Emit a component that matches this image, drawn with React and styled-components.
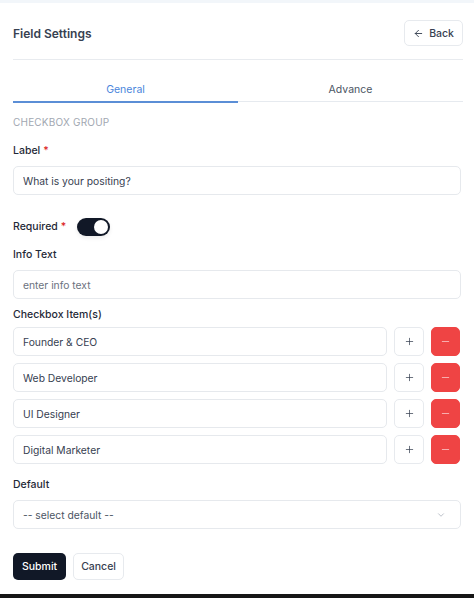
import React, { useState } from "react";
import styled, { createGlobalStyle } from "styled-components";
import { ArrowLeft, Plus, Minus, ChevronDown } from "lucide-react";

const GlobalStyle = createGlobalStyle`
  * { box-sizing: border-box; }
  body {
    margin: 0;
    background: #f2f6fa;
    font-family: Inter, "Noto Sans", "Liberation Sans", sans-serif;
    color: #374151;
  }
`;

const Page = styled.div`
  height: 598px;
  display: flex;
  flex-direction: column;
  padding-top: 3px;
`;

const Card = styled.div`
  flex: 1;
  background: #ffffff;
  padding: 0 11px 0 13px;
  display: flex;
  flex-direction: column;
`;

const BottomEdge = styled.div`
  height: 4px;
  background: #161616;
`;

const Header = styled.div`
  display: flex;
  align-items: center;
  justify-content: space-between;
  padding: 17px 0 13px;
  border-bottom: 1px solid #e8ebef;
`;

const Title = styled.h2`
  margin: 0;
  font-size: 12px;
  font-weight: 600;
  color: #374151;
`;

const OutlineButton = styled.button`
  height: ${(p) => p.$h || 27}px;
  padding: 0 ${(p) => p.$px || 7}px;
  display: inline-flex;
  align-items: center;
  gap: 5px;
  border: 1px solid #e7eaee;
  border-radius: 5px;
  background: #fff;
  font-family: inherit;
  font-size: 10.5px;
  font-weight: 500;
  color: #374151;
`;

const Tabs = styled.div`
  display: flex;
  margin-top: 18px;
`;

const Tab = styled.div`
  flex: 1;
  text-align: center;
  font-size: 10.5px;
  line-height: 13px;
  padding: 5px 0 5px;
  color: ${(p) => (p.$active ? "#4a86dc" : "#4b5563")};
  border-bottom: ${(p) => (p.$active ? "2px solid #5b8ed6" : "1px solid #e6eaef")};
  margin-bottom: ${(p) => (p.$active ? 0 : 1)}px;
`;

const Form = styled.div`
  display: flex;
  flex-direction: column;
  margin-right: 2px;
`;

const Section = styled.div`
  font-size: 10px;
  line-height: 12px;
  letter-spacing: 0.2px;
  color: #a1a7b1;
  text-transform: uppercase;
  margin-top: 13px;
`;

const Label = styled.label`
  display: block;
  font-size: 10.5px;
  line-height: 14px;
  font-weight: 500;
  color: #1f2937;
  margin-top: ${(p) => p.$mt || 0}px;
  margin-bottom: ${(p) => p.$mb ?? 8}px;
`;

const Star = styled.span`
  color: #dc2626;
  margin-left: 3px;
`;

const Input = styled.input`
  display: block;
  width: 100%;
  height: 29px;
  padding: 0 9px;
  border: 1px solid #e6e9ed;
  border-radius: 5px;
  background: #fff;
  font-family: inherit;
  font-size: 10.3px;
  color: #374151;
  outline: none;
  &::placeholder {
    color: #6b7280;
  }
`;

const SwitchRow = styled.div`
  display: flex;
  align-items: center;
  gap: 11px;
  margin-top: 23px;
`;

const Switch = styled.button`
  width: 33px;
  height: 18px;
  border: none;
  border-radius: 9px;
  padding: 2px;
  background: ${(p) => (p.$on ? "#111827" : "#e5e7eb")};
  display: flex;
  justify-content: ${(p) => (p.$on ? "flex-end" : "flex-start")};
  box-shadow: 0 2px 4px rgba(0, 0, 0, 0.08);
`;

const Knob = styled.span`
  width: 14px;
  height: 14px;
  border-radius: 50%;
  background: #fff;
`;

const Items = styled.div`
  display: flex;
  flex-direction: column;
  gap: 7px;
`;

const ItemRow = styled.div`
  display: flex;
  gap: 7px;
  padding-right: 1px;
`;

const IconButton = styled.button`
  flex: 0 0 ${(p) => p.$w}px;
  height: 29px;
  display: flex;
  align-items: center;
  justify-content: center;
  border-radius: 5px;
  padding: 0;
  border: 1px solid ${(p) => (p.$danger ? "#ef4444" : "#e7eaee")};
  background: ${(p) => (p.$danger ? "#ef4444" : "#fff")};
  color: ${(p) => (p.$danger ? "#fbd5d5" : "#374151")};
`;

const SelectBox = styled.div`
  height: 29px;
  display: flex;
  align-items: center;
  justify-content: space-between;
  padding: 0 14px 0 9px;
  border: 1px solid #e6e9ed;
  border-radius: 5px;
  font-size: 10.3px;
  color: #4b5563;
`;

const Actions = styled.div`
  display: flex;
  gap: 7px;
  margin-top: 24px;
`;

const PrimaryButton = styled.button`
  height: 27px;
  padding: 0 9px;
  border: none;
  border-radius: 5px;
  background: #111827;
  color: #fff;
  font-family: inherit;
  font-size: 10.5px;
  font-weight: 500;
`;

const items = ["Founder & CEO", "Web Developer", "UI Designer", "Digital Marketer"];

export default function App() {
  const [required, setRequired] = useState(true);
  const [tab, setTab] = useState("general");

  return (
    <Page>
      <GlobalStyle />
      <Card>
        <Header>
          <Title>Field Settings</Title>
          <OutlineButton $h={26} $px={8}>
            <ArrowLeft size={11} strokeWidth={2} />
            Back
          </OutlineButton>
        </Header>

        <Tabs>
          <Tab $active={tab === "general"} onClick={() => setTab("general")}>
            General
          </Tab>
          <Tab $active={tab === "advance"} onClick={() => setTab("advance")}>
            Advance
          </Tab>
        </Tabs>

        <Form>
          <Section>Checkbox Group</Section>

          <Label $mt={16}>
            Label<Star>*</Star>
          </Label>
          <Input defaultValue="What is your positing?" />

          <SwitchRow>
            <Label $mb={0}>
              Required<Star>*</Star>
            </Label>
            <Switch $on={required} onClick={() => setRequired(!required)}>
              <Knob />
            </Switch>
          </SwitchRow>

          <Label $mt={12}>Info Text</Label>
          <Input placeholder="enter info text" />

          <Label $mt={9} $mb={5}>Checkbox Item(s)</Label>
          <Items>
            {items.map((item) => (
              <ItemRow key={item}>
                <Input defaultValue={item} />
                <IconButton $w={30}>
                  <Plus size={11} strokeWidth={1.6} />
                </IconButton>
                <IconButton $w={29} $danger>
                  <Minus size={11} strokeWidth={1.6} />
                </IconButton>
              </ItemRow>
            ))}
          </Items>

          <Label $mt={14}>Default</Label>
          <SelectBox>
            -- select default --
            <ChevronDown size={10} color="#9ca3af" strokeWidth={1.6} />
          </SelectBox>

          <Actions>
            <PrimaryButton>Submit</PrimaryButton>
            <OutlineButton>Cancel</OutlineButton>
          </Actions>
        </Form>
      </Card>
      <BottomEdge />
    </Page>
  );
}
